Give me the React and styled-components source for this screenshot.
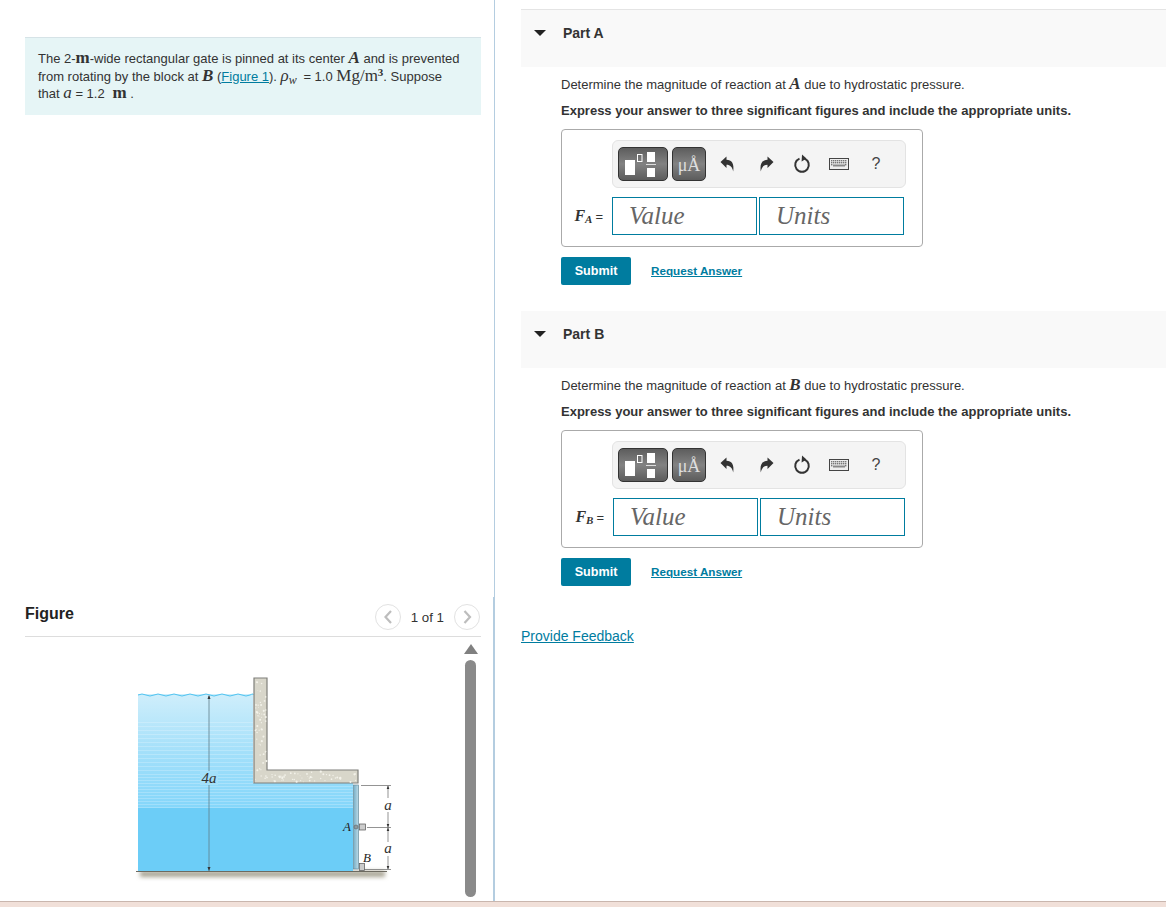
import React from 'react'
import styled, { createGlobalStyle } from 'styled-components'

const GlobalStyle = createGlobalStyle`
  html, body {
    margin: 0;
    padding: 0;
    background: #fff;
  }
  body {
    font-family: "Liberation Sans", Arial, sans-serif;
    color: #333;
    font-size: 13px;
  }
`

const Page = styled.div`
  width: 1166px;
  height: 907px;
  display: flex;
  flex-direction: column;
  overflow: hidden;
`
const Panes = styled.div`
  height: 901px;
  display: flex;
`
const LeftPane = styled.div`
  width: 493px;
  padding-left: 25px;
  box-sizing: border-box;
  flex: none;
`
const Divider = styled.div`
  width: 2px;
  flex: none;
  display: flex;
  flex-direction: column;
  align-items: flex-end;
`
const UpperRule = styled.div`
  width: 1px;
  height: 597px;
  background: #b4cde0;
`
const LowerRule = styled.div`
  width: 2px;
  flex: 1;
  background: #b4cde0;
`
const RightPane = styled.div`
  flex: 1;
  padding-top: 9px;
  padding-left: 26px;
  min-width: 0;
`
const BottomBar = styled.div`
  height: 5px;
  border-top: 1px solid #c9b6ae;
  background: #f1e0d9;
`
const ProblemBox = styled.div`
  width: 456px;
  height: 78px;
  margin-top: 37px;
  box-sizing: border-box;
  background: #e6f5f6;
  border-top: 1px solid #d6e3e7;
  padding: 12px 13px 0;
  font-size: 13px;
  line-height: 17.5px;
  white-space: nowrap;
`
const TextLink = styled.a`
  color: #007c9f;
  text-decoration: underline;
`
const Mi = styled.span`
  font-family: "Liberation Serif", "Times New Roman", serif;
  font-style: italic;
  font-weight: ${p => (p.$bold ? 700 : 400)};
  font-size: 17px;
  line-height: 0;
`
const Mr = styled.span`
  font-family: "Liberation Serif", "Times New Roman", serif;
  font-size: 17px;
  font-weight: ${p => (p.$bold ? 700 : 400)};
  line-height: 0;
`
const MathSub = styled.sub`
  font-family: "Liberation Serif", serif;
  font-style: italic;
  font-size: 12px;
  line-height: 0;
  margin-right: 3px;
`
const MathSup = styled.sup`
  font-family: "Liberation Serif", serif;
  font-weight: 700;
  font-size: 11px;
  line-height: 0;
`
const FigureHeader = styled.div`
  width: 456px;
  height: 34px;
  margin-top: 488px;
  box-sizing: border-box;
  border-bottom: 1px solid #ddd;
  display: flex;
  align-items: flex-start;
  justify-content: space-between;
`
const FigureTitle = styled.div`
  font-size: 16px;
  font-weight: 700;
  line-height: 20px;
  color: #222;
  margin-top: 1px;
`
const Pager = styled.div`
  display: flex;
  align-items: center;
  gap: 10px;
  font-size: 13.3px;
  height: 26px;
  margin: 1px 1px 0 0;
`
const PagerButton = styled.div`
  width: 26px;
  height: 26px;
  box-sizing: border-box;
  border: 1px solid #e2e2e2;
  border-radius: 50%;
  display: flex;
  align-items: center;
  justify-content: center;
`
const FigureBody = styled.div`
  width: 456px;
  height: 264px;
  display: flex;
`
const FigureSvg = styled.svg`
  display: block;
  width: 270px;
  height: 215px;
  margin: 33px 0 0 105px;
  flex: none;
`
const ScrollColumn = styled.div`
  width: 11px;
  margin-left: 65px;
  padding-top: 7px;
  flex: none;
  display: flex;
  flex-direction: column;
  align-items: center;
  gap: 6px;
`
const ScrollArrow = styled.div`
  width: 0;
  height: 0;
  border-left: 7px solid transparent;
  border-right: 7px solid transparent;
  border-bottom: 10px solid #808080;
`
const ScrollThumb = styled.div`
  width: 11px;
  height: 237px;
  border-radius: 6px;
  background: #8a8a8a;
`
const PartSection = styled.section`
  height: 301px;
`
const PartHeader = styled.div`
  height: 58px;
  box-sizing: border-box;
  background: #f9f9f9;
  background-clip: padding-box;
  border-top: 1px solid ${p => (p.$ruled ? '#e4e4e4' : 'transparent')};
  display: flex;
  align-items: flex-start;
  padding: 14px 0 0 13px;
`
const Caret = styled.div`
  width: 0;
  height: 0;
  margin-top: 6px;
  border-left: 6px solid transparent;
  border-right: 6px solid transparent;
  border-top: 6px solid #222;
`
const PartName = styled.div`
  margin-left: 17px;
  font-size: 14px;
  font-weight: 700;
  line-height: 18px;
`
const PartBody = styled.div`
  padding-left: 40px;
`
const Prompt = styled.div`
  margin-top: 9px;
  height: 18px;
  line-height: 18px;
  font-size: 13px;
`
const Instruction = styled.div`
  margin-top: 8px;
  height: 18px;
  line-height: 18px;
  font-size: 13px;
  font-weight: 700;
`
const AnswerBox = styled.div`
  width: 362px;
  height: 118px;
  margin-top: 9px;
  box-sizing: border-box;
  border: 1px solid #aaa;
  border-radius: 4px;
  padding-top: 10px;
`
const Toolbar = styled.div`
  width: 294px;
  height: 48px;
  margin-left: 50px;
  box-sizing: border-box;
  background: #f4f4f4;
  border: 1px solid #e3e3e3;
  border-radius: 6px;
  display: flex;
  align-items: center;
  padding-left: 5px;
`
const ToolButton = styled.div`
  width: ${p => p.$w}px;
  height: 34px;
  margin-right: 4px;
  box-sizing: border-box;
  border: 1px solid #333;
  border-radius: 5px;
  background: linear-gradient(#5d5d5d, #828282 50%, #5c5c5c);
  display: flex;
  align-items: center;
  justify-content: center;
  flex: none;
`
const MuLabel = styled.span`
  font-family: "Liberation Serif", serif;
  font-size: 18px;
  line-height: 20px;
  color: #dedede;
  margin-top: 2px;
`
const IconSlot = styled.div`
  width: ${p => p.$w}px;
  margin-left: ${p => p.$ml}px;
  display: flex;
  justify-content: center;
  flex: none;
`
const FlipSvg = styled.svg`
  display: block;
  transform: ${p => (p.$flip ? 'scaleX(-1)' : 'none')};
`
const HelpMark = styled.span`
  font-size: 16px;
  color: #444;
`
const InputRow = styled.div`
  display: flex;
  margin-top: 9px;
  align-items: center;
`
const VarLabel = styled.div`
  width: ${p => p.$w}px;
  padding-right: 9px;
  box-sizing: border-box;
  text-align: right;
  white-space: nowrap;
  font-size: 13px;
  flex: none;
`
const VarName = styled.span`
  font-family: "Liberation Serif", serif;
  font-style: italic;
  font-weight: 700;
  font-size: 16px;
`
const VarSub = styled.span`
  font-family: "Liberation Serif", serif;
  font-style: italic;
  font-weight: 700;
  font-size: 11px;
  position: relative;
  top: 2px;
  margin-right: 3px;
`
const AnswerField = styled.div`
  width: 145px;
  height: 38px;
  margin-right: 2px;
  box-sizing: border-box;
  border: 1px solid #007c9f;
  padding-left: 16px;
  font-family: "Liberation Serif", serif;
  font-style: italic;
  font-size: 25px;
  line-height: 36px;
  color: #666;
`
const ActionRow = styled.div`
  display: flex;
  align-items: center;
  margin-top: 10px;
`
const SubmitButton = styled.div`
  width: 70px;
  height: 28px;
  line-height: 29px;
  border-radius: 2px;
  background: #007c9f;
  color: #fff;
  font-size: 12.6px;
  font-weight: 700;
  text-align: center;
`
const RequestLink = styled.a`
  margin-left: 20px;
  padding-bottom: 2px;
  font-size: 11.7px;
  font-weight: 700;
  color: #007c9f;
  text-decoration: underline;
`
const FeedbackLink = styled(TextLink)`
  display: inline-block;
  margin-top: 16px;
  font-size: 14px;
  line-height: 18px;
`

function Chevron({ dir }) {
  const d = dir === 'left' ? 'M9 2 L3.5 8 L9 14' : 'M3.5 2 L9 8 L3.5 14'
  return (
    <svg width="12" height="16" viewBox="0 0 12 16">
      <path d={d} fill="none" stroke="#bdbdbd" strokeWidth="2.2" />
    </svg>
  )
}

function ArrowIcon({ flip }) {
  return (
    <FlipSvg $flip={flip} width="15" height="16" viewBox="0 0 15 16">
      <path d="M0.5 6 L6.5 0.5 V3.8 C11.5 3.8 14.5 7.5 13.2 15.5 C12.2 11 10.2 8.8 6.5 8.8 V12 Z" fill="#333" />
    </FlipSvg>
  )
}

function ReloadIcon() {
  return (
    <svg width="18" height="20" viewBox="0 0 18 20">
      <path d="M6.5 4.6 A6.8 6.8 0 1 0 11.5 4.6" fill="none" stroke="#333" strokeWidth="2" />
      <path d="M9 0.5 L13.5 4.6 L8.6 7.6 Z" fill="#333" />
    </svg>
  )
}

function KeyboardIcon() {
  const keys = []
  for (let r = 0; r < 3; r++) {
    for (let c = 0; c < 8; c++) {
      if (r === 2 && c > 0 && c < 7) continue
      keys.push(<rect key={`${r}-${c}`} x={2 + c * 2} y={2 + r * 2} width="1.4" height="1.4" fill="#777" />)
    }
  }
  return (
    <svg width="20" height="12" viewBox="0 0 20 12">
      <rect x="0.5" y="0.5" width="19" height="11" fill="#eee" stroke="#444" />
      {keys}
      <rect x="4" y="6.5" width="12" height="2" fill="#888" />
    </svg>
  )
}

function TemplateIcon() {
  return (
    <svg width="36" height="26" viewBox="0 0 36 26">
      <rect x="0" y="9" width="10" height="15" fill="#fff" />
      <rect x="12.5" y="3.5" width="4.5" height="7" fill="none" stroke="#fff" />
      <rect x="22" y="1" width="8" height="10" fill="#fff" />
      <rect x="21" y="13" width="10" height="1" fill="#ddd" />
      <rect x="22" y="17" width="8" height="9" fill="#fff" />
    </svg>
  )
}

function AnswerPanel({ symbol, labelWidth }) {
  return (
    <AnswerBox>
      <Toolbar>
        <ToolButton $w={50}><TemplateIcon /></ToolButton>
        <ToolButton $w={34}><MuLabel>μÅ</MuLabel></ToolButton>
        <IconSlot $w={15} $ml={10}><ArrowIcon /></IconSlot>
        <IconSlot $w={15} $ml={24}><ArrowIcon flip /></IconSlot>
        <IconSlot $w={18} $ml={19}><ReloadIcon /></IconSlot>
        <IconSlot $w={20} $ml={18}><KeyboardIcon /></IconSlot>
        <IconSlot $w={12} $ml={21}><HelpMark>?</HelpMark></IconSlot>
      </Toolbar>
      <InputRow>
        <VarLabel $w={labelWidth}>
          <VarName>F</VarName><VarSub>{symbol}</VarSub>=
        </VarLabel>
        <AnswerField>Value</AnswerField>
        <AnswerField>Units</AnswerField>
      </InputRow>
    </AnswerBox>
  )
}

function Part({ name, symbol, labelWidth, ruled }) {
  return (
    <PartSection>
      <PartHeader $ruled={ruled}>
        <Caret />
        <PartName>Part {name}</PartName>
      </PartHeader>
      <PartBody>
        <Prompt>
          Determine the magnitude of reaction at <Mi $bold>{name}</Mi> due to hydrostatic pressure.
        </Prompt>
        <Instruction>Express your answer to three significant figures and include the appropriate units.</Instruction>
        <AnswerPanel symbol={symbol} labelWidth={labelWidth} />
        <ActionRow>
          <SubmitButton>Submit</SubmitButton>
          <RequestLink>Request Answer</RequestLink>
        </ActionRow>
      </PartBody>
    </PartSection>
  )
}

// concrete speckle, seeded so the picture never changes
const rand = i => {
  const v = Math.sin(i * 12.9898) * 43758.5453
  return v - Math.floor(v)
}
const speckle = []
for (let i = 0; i < 110; i++) {
  const r = 0.4 + rand(i + 500) * 0.7
  if (i % 2) {
    speckle.push([255.5 + rand(i) * 11, 679 + rand(i + 200) * 103, r])
  } else {
    speckle.push([267 + rand(i) * 90, 771.5 + rand(i + 200) * 10.5, r])
  }
}

function stripes() {
  // pale bands in the water, tighter near the bottom of the gradient
  const out = []
  for (let y = 722; y < 808; y += y > 770 ? 3 : 4) {
    out.push(<rect key={y} x="138" y={y} width={y > 783 ? 215 : 115} height="1" fill="#fff" opacity="0.22" />)
  }
  return out
}

function GateFigure() {
  return (
    <FigureSvg viewBox="130 670 270 215">
      <defs>
        <linearGradient id="water" x1="0" y1="694" x2="0" y2="808" gradientUnits="userSpaceOnUse">
          <stop offset="0" stopColor="#cfeefb" />
          <stop offset="0.5" stopColor="#a4e0fa" />
          <stop offset="1" stopColor="#84d6fa" />
        </linearGradient>
        <linearGradient id="gate" x1="353" y1="0" x2="358" y2="0" gradientUnits="userSpaceOnUse">
          <stop offset="0" stopColor="#6fa9c2" />
          <stop offset="1" stopColor="#b5d6e4" />
        </linearGradient>
        <filter id="soft" x="-10%" y="-100%" width="120%" height="300%">
          <feGaussianBlur stdDeviation="2" />
        </filter>
      </defs>
      <rect x="140" y="871" width="245" height="6" fill="#a9a594" filter="url(#soft)" />
      <path d="M138 694 H253 V783 H353 V871 H138 Z" fill="url(#water)" />
      <rect x="138" y="808" width="215" height="63" fill="#6ccdf7" />
      {stripes()}
      <path
        d="M138 695 q4 -2 8 0 t8 0 t8 0 t8 0 t8 0 t8 0 t8 0 t8 0 t8 0 t8 0 t8 0 t8 0 t8 0 t8 0 t3 0"
        fill="none"
        stroke="#4fc3f0"
        strokeWidth="1"
      />
      <path d="M254 678 H267 V770 H358 V783 H254 Z" fill="#d8d6ca" stroke="#7f7f7a" strokeWidth="1.2" />
      {speckle.map(([x, y, r]) => (
        <circle key={`${x}-${y}`} cx={x} cy={y} r={r} fill="#f3f2ea" />
      ))}
      <rect x="353.5" y="785" width="5" height="84" fill="url(#gate)" stroke="#668a9a" strokeWidth="0.7" />
      <path d="M209 696 V871" stroke="#5f7d8c" strokeWidth="0.8" />
      <path d="M207.5 699 L209 695 L210.5 699 Z M207.5 867 L209 871 L210.5 867 Z" fill="#333" />
      <rect x="200" y="771" width="18" height="14" fill="#a3e0fa" />
      <text x="209" y="783" textAnchor="middle" fontFamily="Liberation Serif" fontStyle="italic" fontSize="15" fill="#333">4a</text>
      <path d="M361 785.5 H391 M367 827.5 H391 M364 869.5 H391 M388 786 V869" stroke="#666" strokeWidth="0.7" fill="none" />
      <rect x="381" y="798" width="14" height="14" fill="#fff" />
      <rect x="381" y="842" width="14" height="14" fill="#fff" />
      <path d="M386.7 789 L388 785.5 L389.3 789 Z M386.7 824 L388 827.5 L389.3 824 Z M386.7 831 L388 827.5 L389.3 831 Z M386.7 866 L388 869.5 L389.3 866 Z" fill="#333" />
      <text x="388" y="810" textAnchor="middle" fontFamily="Liberation Serif" fontStyle="italic" fontSize="15" fill="#333">a</text>
      <text x="388" y="853" textAnchor="middle" fontFamily="Liberation Serif" fontStyle="italic" fontSize="15" fill="#333">a</text>
      <text x="347" y="831" textAnchor="middle" fontFamily="Liberation Serif" fontStyle="italic" fontSize="13" fill="#222">A</text>
      <circle cx="356" cy="827" r="2" fill="#8d9aa0" stroke="#555" strokeWidth="0.5" />
      <rect x="359.5" y="824" width="6" height="6" fill="#ccc" stroke="#555" strokeWidth="0.7" />
      <text x="367" y="862" textAnchor="middle" fontFamily="Liberation Serif" fontStyle="italic" fontSize="13" fill="#222">B</text>
      <rect x="359.5" y="863.5" width="5" height="7" fill="#ccc" stroke="#555" strokeWidth="0.7" />
      <path d="M136 871.5 H387" stroke="#6d6a60" strokeWidth="1" />
    </FigureSvg>
  )
}

export default function App() {
  return (
    <Page>
      <GlobalStyle />
      <Panes>
        <LeftPane>
          <ProblemBox>
            The 2-<Mr $bold>m</Mr>-wide rectangular gate is pinned at its center <Mi $bold>A</Mi> and is prevented<br />
            from rotating by the block at <Mi $bold>B</Mi> (<TextLink>Figure 1</TextLink>). <Mi>ρ</Mi><MathSub>w</MathSub> = 1.0{' '}
            <Mr>Mg/m</Mr><MathSup>3</MathSup>. Suppose<br />
            that <Mi>a</Mi> = 1.2 <Mr $bold>&nbsp;m</Mr> .
          </ProblemBox>
          <FigureHeader>
            <FigureTitle>Figure</FigureTitle>
            <Pager>
              <PagerButton><Chevron dir="left" /></PagerButton>
              <span>1 of 1</span>
              <PagerButton><Chevron dir="right" /></PagerButton>
            </Pager>
          </FigureHeader>
          <FigureBody>
            <GateFigure />
            <ScrollColumn>
              <ScrollArrow />
              <ScrollThumb />
            </ScrollColumn>
          </FigureBody>
        </LeftPane>
        <Divider>
          <UpperRule />
          <LowerRule />
        </Divider>
        <RightPane>
          <Part name="A" symbol="A" labelWidth={50} ruled />
          <Part name="B" symbol="B" labelWidth={51} />
          <FeedbackLink>Provide Feedback</FeedbackLink>
        </RightPane>
      </Panes>
      <BottomBar />
    </Page>
  )
}
